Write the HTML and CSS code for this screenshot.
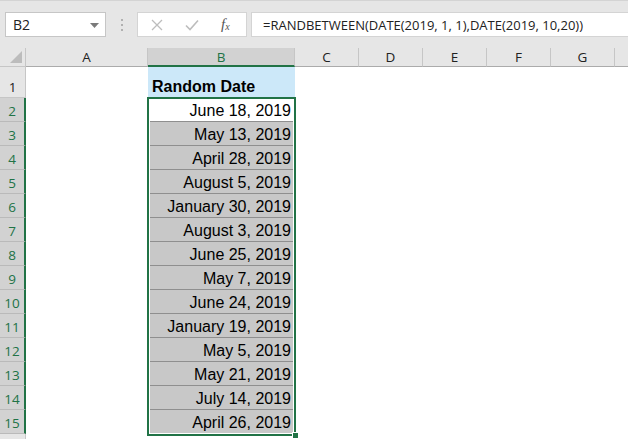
FILE: index.html
```html
<!DOCTYPE html>
<html lang="en">
<head>
    <meta charset="UTF-8">
    <title>Random Date</title>
    <link rel="stylesheet" href="styles.css">
</head>
<body>
    <div class="toolbar">
        <div class="name-box">
            <span>B2</span>
            <svg class="caret" width="9" height="5" viewBox="0 0 9 5"><path d="M0 0h9L4.5 5z" fill="#7a7a7a"/></svg>
        </div>
        <div class="grip"><i></i><i></i><i></i></div>
        <div class="fx-box">
            <svg width="12" height="12" viewBox="0 0 12 12"><path d="M1 1l10 10M11 1L1 11" stroke="#bdbdbd" stroke-width="1.3" fill="none"/></svg>
            <svg width="14" height="12" viewBox="0 0 14 12"><path d="M1 6.5l4 4L13 1.5" stroke="#bdbdbd" stroke-width="1.6" fill="none"/></svg>
            <span class="fx">f<sub>x</sub></span>
        </div>
        <div class="formula">=RANDBETWEEN(DATE(2019, 1, 1),DATE(2019, 10,20))</div>
    </div>

    <div class="sheet">
        <div class="row head-row">
            <div class="rh corner"><svg width="12" height="12" viewBox="0 0 12 12"><path d="M12 0v12H0z" fill="#bcbcbc"/></svg></div>
            <div class="ch col-a">A</div>
            <div class="ch col-b active">B</div>
            <div class="ch col-n">C</div>
            <div class="ch col-n">D</div>
            <div class="ch col-n">E</div>
            <div class="ch col-n">F</div>
            <div class="ch col-n">G</div>
            <div class="ch col-rest"></div>
        </div>
        <div class="row first">
            <div class="rh">1</div>
            <div class="cell col-a"></div>
            <div class="cell col-b title">Random Date</div>
        </div>
        <div class="row"><div class="rh sel">2</div><div class="cell col-a"></div><div class="cell col-b date current">June 18, 2019</div></div>
        <div class="row"><div class="rh sel">3</div><div class="cell col-a"></div><div class="cell col-b date">May 13, 2019</div></div>
        <div class="row"><div class="rh sel">4</div><div class="cell col-a"></div><div class="cell col-b date">April 28, 2019</div></div>
        <div class="row"><div class="rh sel">5</div><div class="cell col-a"></div><div class="cell col-b date">August 5, 2019</div></div>
        <div class="row"><div class="rh sel">6</div><div class="cell col-a"></div><div class="cell col-b date">January 30, 2019</div></div>
        <div class="row"><div class="rh sel">7</div><div class="cell col-a"></div><div class="cell col-b date">August 3, 2019</div></div>
        <div class="row"><div class="rh sel">8</div><div class="cell col-a"></div><div class="cell col-b date">June 25, 2019</div></div>
        <div class="row"><div class="rh sel">9</div><div class="cell col-a"></div><div class="cell col-b date">May 7, 2019</div></div>
        <div class="row"><div class="rh sel">10</div><div class="cell col-a"></div><div class="cell col-b date">June 24, 2019</div></div>
        <div class="row"><div class="rh sel">11</div><div class="cell col-a"></div><div class="cell col-b date">January 19, 2019</div></div>
        <div class="row"><div class="rh sel">12</div><div class="cell col-a"></div><div class="cell col-b date">May 5, 2019</div></div>
        <div class="row"><div class="rh sel">13</div><div class="cell col-a"></div><div class="cell col-b date">May 21, 2019</div></div>
        <div class="row"><div class="rh sel">14</div><div class="cell col-a"></div><div class="cell col-b date">July 14, 2019</div></div>
        <div class="row"><div class="rh sel">15</div><div class="cell col-a"></div><div class="cell col-b date">April 26, 2019</div></div>
        <div class="row"><div class="rh"></div></div>

        <!-- selection frame over B2:B15 -->
        <div class="selection"><span class="handle"></span></div>
    </div>
</body>
</html>
```

FILE: styles.css
```css
* {
    box-sizing: border-box;
}
body {
    margin: 0;
    width: 628px;
    height: 439px;
    overflow: hidden;
    background: #fff;
    font-family: "Open Sans", "Noto Sans", sans-serif;
}

/* formula bar */
.toolbar {
    height: 48px;
    background: #e6e6e6;
    border-top: 1px solid #d4d4d4;
    display: flex;
    align-items: flex-start;
    padding: 11px 0 0 5px;
}
.name-box {
    width: 101px;
    height: 25px;
    background: #fff;
    border: 1px solid #c6c6c6;
    display: flex;
    align-items: center;
    justify-content: space-between;
    padding: 0 6px 0 7px;
    font-size: 14px;
    color: #222;
}
.caret {
    margin-top: 1px;
}
.grip {
    width: 31px;
    height: 25px;
    display: flex;
    flex-direction: column;
    align-items: center;
    justify-content: center;
    gap: 3px;
}
.grip i {
    width: 2px;
    height: 2px;
    background: #b0b0b0;
}
.fx-box {
    width: 110px;
    height: 25px;
    background: #fff;
    border: 1px solid #d4d4d4;
    display: flex;
    align-items: center;
    gap: 22px;
    padding-left: 13px;
}
.fx {
    font-family: "Liberation Serif", serif;
    font-style: italic;
    font-size: 15px;
    color: #555;
}
.fx sub {
    font-size: 10px;
    vertical-align: -1px;
}
.formula {
    flex: 1;
    height: 25px;
    margin-left: 4px;
    background: #fff;
    border: 1px solid #d4d4d4;
    border-right: none;
    padding: 3px 0 0 11px;
    font-size: 13px;
    color: #222;
    white-space: nowrap;
}

/* grid */
.sheet {
    position: relative;
}
.row {
    display: flex;
    height: 24px;
}
.row.head-row {
    height: 19px;
    background: #e6e6e6;
}
.row.first {
    height: 31px;
}
.rh {
    width: 26px;
    flex: none;
    background: #e6e6e6;
    border-right: 1px solid #c6c6c6;
    border-bottom: 1px solid #c6c6c6;
    display: flex;
    align-items: flex-end;
    justify-content: center;
    padding-bottom: 1px;
    font-size: 13.5px;
    color: #222;
}
.rh.corner {
    align-items: flex-end;
    justify-content: flex-end;
    padding: 0 3px 3px 0;
}
.rh.sel {
    background: #d2d2d2;
    color: #217346;
    border-right: 2px solid #217346;
    border-bottom-color: #bababa;
}
.ch {
    flex: none;
    height: 19px;
    border-right: 1px solid #c6c6c6;
    border-bottom: 1px solid #ababab;
    text-align: center;
    font-size: 13.5px;
    line-height: 19px;
    color: #222;
}
.ch.active {
    background: #d2d2d2;
    color: #217346;
    border-bottom: 2px solid #217346;
}
.col-a {
    width: 122px;
}
.col-b {
    width: 147px;
}
.col-n {
    width: 64px;
}
.ch.col-n:first-of-type {
    width: 63px;
}
.col-rest {
    flex: 1;
    border-right: none;
}

/* cells */
.cell {
    flex: none;
    font-family: "Liberation Sans", Arial, sans-serif;
    font-size: 16px;
    color: #000;
    display: flex;
    align-items: flex-end;
    padding: 0 4px 1px 4px;
}
.cell.title {
    background: #cce8f9;
    font-weight: bold;
    padding-bottom: 2px;
}
.cell.date {
    background: #c8c8c8;
    border-bottom: 1px solid #8f8f8f;
    justify-content: flex-end;
}
.cell.current {
    background: #fff;
}

/* selection frame B2:B15 */
.selection {
    position: absolute;
    left: 147px;
    top: 49px;
    width: 149px;
    height: 339px;
    border: 2px solid #217346;
    box-shadow: inset 0 0 0 1px #fff;
    pointer-events: none;
}
.handle {
    position: absolute;
    right: -5px;
    bottom: -5px;
    width: 7px;
    height: 7px;
    background: #217346;
    border: 1px solid #fff;
}
```
